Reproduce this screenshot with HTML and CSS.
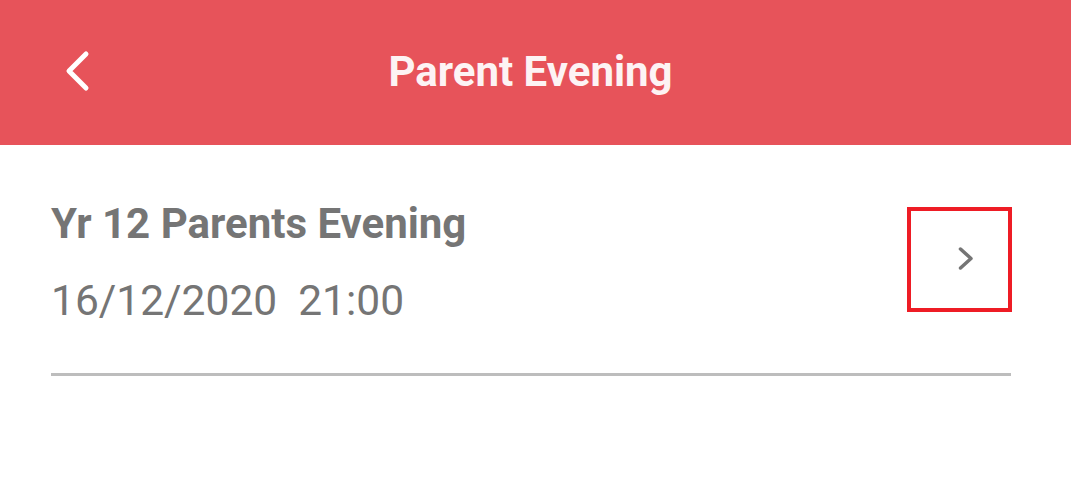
FILE: index.html
```html
<!DOCTYPE html>
<html>
<head>
<meta charset="utf-8">
<link rel="stylesheet" href="styles.css">
</head>
<body>
<header class="appbar">
  <button class="back" aria-label="Back">
    <svg width="30" height="44" viewBox="0 0 30 44"><path d="M24 5 L7 22 L24 39" fill="none" stroke="#fff" stroke-width="5" stroke-linecap="round" stroke-linejoin="round"/></svg>
  </button>
  <h1 class="title">Parent Evening</h1>
</header>
<main class="list">
  <div class="item">
    <div class="info">
      <div class="name">Yr 12 Parents Evening</div>
      <div class="date">16/12/2020&nbsp;&nbsp;21:00</div>
    </div>
    <div class="go">
      <svg class="chev" width="16" height="26" viewBox="0 0 16 26"><path d="M2.5 3 L13 12.5 L2.5 22" fill="none" stroke="#757575" stroke-width="3.5" stroke-linecap="round" stroke-linejoin="round"/></svg>
    </div>
  </div>
  <div class="divider"></div>
</main>
</body>
</html>
```
FILE: styles.css
```css
html, body {
  margin: 0;
  padding: 0;
  background: #ffffff;
  font-family: Roboto, "Noto Sans", sans-serif;
}
.appbar {
  height: 145px;
  background: #e7535a;
  display: flex;
  align-items: center;
  justify-content: center;
  position: relative;
  padding-right: 10px;
}
.back {
  position: absolute;
  left: 62px;
  top: 49px;
  background: none;
  border: 0;
  padding: 0;
  width: 30px;
  height: 44px;
}
.back svg { display: block; }
.title {
  margin: 0 0 2px 0;
  color: #fdf3f4;
  font-size: 42px;
  font-weight: 700;
  line-height: 1;
}
.list {
  padding: 0 60px 0 51px;
}
.item {
  display: flex;
  align-items: flex-start;
  justify-content: space-between;
  padding-top: 55px;
}
.info {
  display: flex;
  flex-direction: column;
}
.name {
  color: #757575;
  font-size: 42px;
  font-weight: 700;
  line-height: 48px;
}
.date {
  color: #757575;
  font-size: 42.5px;
  font-weight: 400;
  line-height: 48px;
  margin-top: 29px;
}
.go {
  width: 97px;
  height: 97px;
  margin-top: 7px;
  margin-right: -1px;
  border: 4px solid #ee1c25;
  display: flex;
  align-items: center;
  justify-content: center;
}
.chev {
  display: block;
  margin-left: 12px;
  margin-top: -2px;
}
.divider {
  height: 3px;
  background: #bdbdbd;
  margin-top: 48px;
}
```
